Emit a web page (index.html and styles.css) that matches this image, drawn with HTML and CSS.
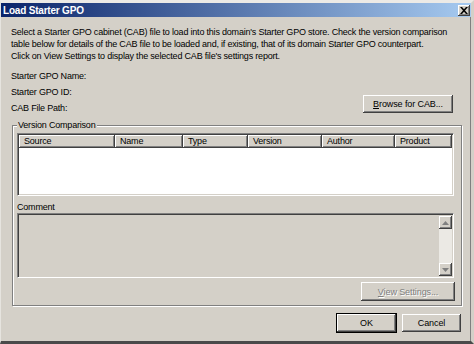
FILE: index.html
```html
<!DOCTYPE html>
<html>
<head>
<meta charset="utf-8">
<link rel="stylesheet" href="styles.css">
</head>
<body>
<div class="window">
  <div class="titlebar">
    <span class="title">Load Starter GPO</span>
    <span class="close"><svg width="8" height="7" viewBox="0 0 8 7"><path d="M0 0h2l2 2.2L6 0h2L5 3.5 8 7H6L4 4.8 2 7H0l3-3.5z" fill="#000"/></svg></span>
  </div>
  <div class="content">
    <p class="desc">Select a Starter GPO cabinet (CAB) file to load into this domain's Starter GPO store. Check the version comparison<br>table below for details of the CAB file to be loaded and, if existing, that of its domain Starter GPO counterpart.<br>Click on View Settings to display the selected CAB file's settings report.</p>
    <div class="fields">
      <div class="labels">
        <div class="lbl">Starter GPO Name:</div>
        <div class="lbl">Starter GPO ID:</div>
        <div class="lbl">CAB File Path:</div>
      </div>
      <button class="btn browse"><u>B</u>rowse for CAB...</button>
    </div>
    <div class="group">
      <span class="legend">Version Comparison</span>
      <div class="list">
        <div class="header">
          <div class="col c1">Source</div>
          <div class="col c2">Name</div>
          <div class="col c3">Type</div>
          <div class="col c4">Version</div>
          <div class="col c5">Author</div>
          <div class="col c6">Product</div>
        </div>
      </div>
      <div class="comment-lbl">Comment</div>
      <div class="comment">
        <div class="comment-text"></div>
        <div class="scrollbar">
          <div class="sbtn"><svg width="7" height="4" viewBox="0 0 7 4"><path d="M3.5 0L7 4H0z" fill="#808080"/></svg></div>
          <div class="track"></div>
          <div class="sbtn"><svg width="7" height="4" viewBox="0 0 7 4"><path d="M0 0h7L3.5 4z" fill="#808080"/></svg></div>
        </div>
      </div>
      <div class="group-actions">
        <button class="btn view" disabled><u>V</u>iew Settings...</button>
      </div>
    </div>
    <div class="actions">
      <button class="btn ok">OK</button>
      <button class="btn cancel">Cancel</button>
    </div>
  </div>
</div>
</body>
</html>
```
FILE: styles.css
```css
html, body {
  margin: 0;
  padding: 0;
  background: #d4d0c8;
}
body {
  font-family: "Liberation Sans", Arial, sans-serif;
  font-size: 9px;
  letter-spacing: -0.2px;
  color: #000;
}
.window {
  width: 474px;
  height: 344px;
  box-sizing: border-box;
  background: #d4d0c8;
  border-top: 3px solid #eceae6;
  border-left: 1px solid #e6e4df;
  border-right: 3px solid #d4d0c8;
  border-bottom: 3px solid #4a4a4a;
  box-shadow: inset -1px 0 0 #808080;
  display: flex;
  flex-direction: column;
  overflow: hidden;
  position: relative;
}
.window::after {
  content: "";
  position: absolute;
  top: -3px;
  right: -3px;
  bottom: -3px;
  width: 2px;
  background: #4a4a4a;
}
.titlebar {
  height: 14px;
  flex: none;
  background: linear-gradient(to right, #0a246a, #a6caf0);
  display: flex;
  align-items: center;
  justify-content: space-between;
  padding: 0 1px 0 2px;
}
.title {
  color: #fff;
  font-weight: bold;
  font-size: 10px;
  letter-spacing: -0.2px;
}
.close {
  width: 12px;
  height: 11px;
  background: #d4d0c8;
  box-shadow: inset -1px -1px 0 #404040, inset 1px 1px 0 #fff, inset -2px -2px 0 #808080;
  display: flex;
  align-items: center;
  justify-content: center;
}
.content {
  flex: 1;
  padding: 9px 9px 0 10px;
  display: flex;
  flex-direction: column;
}
.desc {
  margin: 0;
  line-height: 12px;
  white-space: nowrap;
}
.fields {
  display: flex;
  justify-content: space-between;
  align-items: flex-end;
  margin-top: 8px;
  padding-right: 9px;
}
.labels {
  display: flex;
  flex-direction: column;
  gap: 3px;
}
.lbl {
  height: 13px;
  line-height: 13px;
}
.btn {
  font-family: "Liberation Sans", Arial, sans-serif;
  font-size: 9px;
  letter-spacing: -0.1px;
  color: #000;
  background: #d4d0c8;
  border: none;
  padding: 0;
  box-shadow: inset -1px -1px 0 #404040, inset 1px 1px 0 #fff, inset -2px -2px 0 #808080;
  height: 18px;
}
.browse {
  width: 90px;
  margin-bottom: 2px;
}
.group {
  position: relative;
  margin-top: 10px;
  margin-left: 1px;
  border: 1px solid #808080;
  box-shadow: inset 1px 1px 0 #fff, 1px 1px 0 #fff;
  padding: 7px 7px 4px 4px;
  display: flex;
  flex-direction: column;
}
.legend {
  position: absolute;
  top: -7px;
  left: 4px;
  background: #d4d0c8;
  padding: 0 2px 0 1px;
  line-height: 12px;
}
.list {
  height: 63px;
  box-sizing: border-box;
  background: #fff;
  border: 1px solid;
  border-color: #808080 #fff #fff #808080;
  box-shadow: inset 1px 1px 0 #404040, inset -1px -1px 0 #d4d0c8;
  padding: 1px;
}
.header {
  display: flex;
  height: 13px;
}
.col {
  box-sizing: border-box;
  background: #d4d0c8;
  box-shadow: inset -1px -1px 0 #404040, inset 1px 1px 0 #fff, inset -2px -2px 0 #808080;
  padding-left: 5px;
  line-height: 13px;
}
.c1 { width: 96px; }
.c2 { width: 68px; }
.c3 { width: 65px; }
.c4 { width: 74px; }
.c5 { width: 73px; }
.c6 { flex: 1; }
.comment-lbl {
  margin-top: 5px;
  line-height: 12px;
}
.comment {
  height: 65px;
  border: 1px solid;
  border-color: #808080 #fff #fff #808080;
  box-shadow: inset 1px 1px 0 #404040, inset -1px -1px 0 #d4d0c8;
  padding: 2px 1px 1px 2px;
  display: flex;
  box-sizing: border-box;
}
.comment-text { flex: 1; }
.scrollbar {
  width: 13px;
  display: flex;
  flex-direction: column;
}
.sbtn {
  height: 13px;
  background: #d4d0c8;
  box-shadow: inset -1px -1px 0 #404040, inset 1px 1px 0 #fff, inset -2px -2px 0 #808080;
  display: flex;
  align-items: center;
  justify-content: center;
}
.track {
  flex: 1;
  background: #ebe9e4;
}
.group-actions {
  display: flex;
  justify-content: flex-end;
  margin-top: 4px;
  margin-right: -1px;
}
.view {
  width: 94px;
  height: 19px;
  color: #808080;
  text-shadow: 1px 1px 0 #fff;
}
.actions {
  display: flex;
  justify-content: flex-end;
  gap: 6px;
  margin-top: 8px;
  padding-right: 1px;
}
.ok, .cancel {
  width: 59px;
  height: 18px;
}
.ok {
  box-shadow: 0 0 0 1px #000, inset -1px -1px 0 #404040, inset 1px 1px 0 #fff, inset -2px -2px 0 #808080;
}
```
